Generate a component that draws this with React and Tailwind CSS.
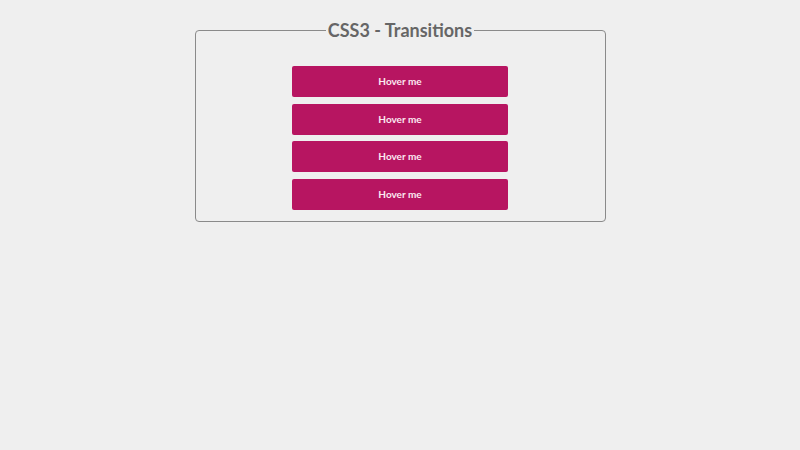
export default function App() {
  const buttons = ["Hover me", "Hover me", "Hover me", "Hover me"];
  return (
    <div
      className="min-h-[450px] w-full bg-[#efefef] pt-[17px]"
      style={{ fontFamily: "Lato, 'Open Sans', sans-serif" }}
    >
      <fieldset className="mx-auto w-[411px] rounded-[4px] border border-[#8a8a8a] px-0 pb-[11px] pt-[23px]">
        <legend className="mx-auto px-[2px] text-[18px] font-bold leading-[26px] text-[#666666]">
          CSS3 - Transitions
        </legend>
        <div className="flex flex-col items-center gap-[6.5px]">
          {buttons.map((label, i) => (
            <button
              key={i}
              className="h-[31px] w-[216px] rounded-[2px] bg-[#b71561] text-[10px] font-bold text-[#fbe9f1]"
            >
              {label}
            </button>
          ))}
        </div>
      </fieldset>
    </div>
  );
}
